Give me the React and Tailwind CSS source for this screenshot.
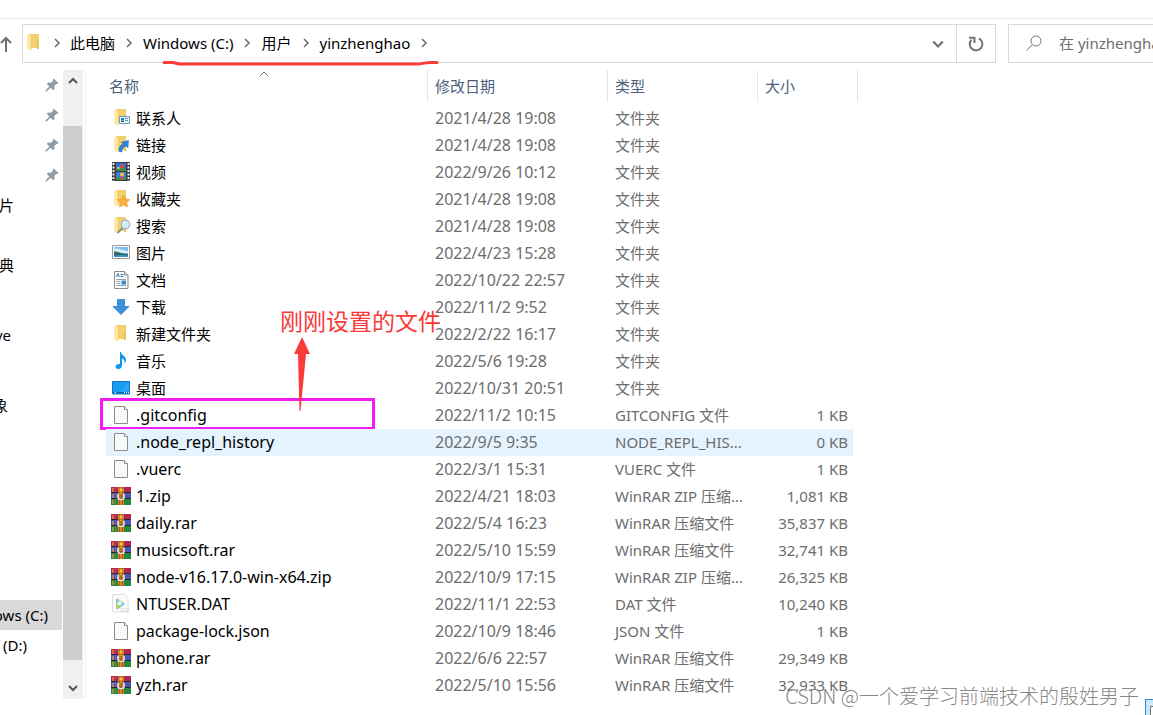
import { useState } from "react";

const crumbs = ["此电脑", "Windows (C:)", "用户", "yinzhenghao"];

const files = [
  { name: "联系人", date: "2021/4/28 19:08", type: "文件夹", size: "", icon: "contacts" },
  { name: "链接", date: "2021/4/28 19:08", type: "文件夹", size: "", icon: "links" },
  { name: "视频", date: "2022/9/26 10:12", type: "文件夹", size: "", icon: "video" },
  { name: "收藏夹", date: "2021/4/28 19:08", type: "文件夹", size: "", icon: "favorites" },
  { name: "搜索", date: "2021/4/28 19:08", type: "文件夹", size: "", icon: "search" },
  { name: "图片", date: "2022/4/23 15:28", type: "文件夹", size: "", icon: "pictures" },
  { name: "文档", date: "2022/10/22 22:57", type: "文件夹", size: "", icon: "documents" },
  { name: "下载", date: "2022/11/2 9:52", type: "文件夹", size: "", icon: "downloads" },
  { name: "新建文件夹", date: "2022/2/22 16:17", type: "文件夹", size: "", icon: "folder" },
  { name: "音乐", date: "2022/5/6 19:28", type: "文件夹", size: "", icon: "music" },
  { name: "桌面", date: "2022/10/31 20:51", type: "文件夹", size: "", icon: "desktop" },
  { name: ".gitconfig", date: "2022/11/2 10:15", type: "GITCONFIG 文件", size: "1 KB", icon: "file", marked: true },
  { name: ".node_repl_history", date: "2022/9/5 9:35", type: "NODE_REPL_HIS...", size: "0 KB", icon: "file" },
  { name: ".vuerc", date: "2022/3/1 15:31", type: "VUERC 文件", size: "1 KB", icon: "file" },
  { name: "1.zip", date: "2022/4/21 18:03", type: "WinRAR ZIP 压缩...", size: "1,081 KB", icon: "rar" },
  { name: "daily.rar", date: "2022/5/4 16:23", type: "WinRAR 压缩文件", size: "35,837 KB", icon: "rar" },
  { name: "musicsoft.rar", date: "2022/5/10 15:59", type: "WinRAR 压缩文件", size: "32,741 KB", icon: "rar" },
  { name: "node-v16.17.0-win-x64.zip", date: "2022/10/9 17:15", type: "WinRAR ZIP 压缩...", size: "26,325 KB", icon: "rar" },
  { name: "NTUSER.DAT", date: "2022/11/1 22:53", type: "DAT 文件", size: "10,240 KB", icon: "dat" },
  { name: "package-lock.json", date: "2022/10/9 18:46", type: "JSON 文件", size: "1 KB", icon: "file" },
  { name: "phone.rar", date: "2022/6/6 22:57", type: "WinRAR 压缩文件", size: "29,349 KB", icon: "rar" },
  { name: "yzh.rar", date: "2022/5/10 15:56", type: "WinRAR 压缩文件", size: "32,933 KB", icon: "rar" },
];

function FolderShape() {
  return (
    <>
      <path d="M5 1h10v14H5z" fill="#f3cf6e" />
      <path d="M13 7h2v9h-2z" fill="#e9c25b" />
      <path d="M3 1.5L7 3v14.5L3 16z" fill="#ffe9a6" />
      <path d="M7 3v14.5" stroke="#eecb6c" strokeWidth="0.6" />
    </>
  );
}

const iconShapes = {
  folder: <FolderShape />,
  contacts: (
    <>
      <FolderShape />
      <path d="M8.5 8.5h10v7h-10z" fill="#eaf6fd" stroke="#6f9fc0" />
      <path d="M10 10h3v2h-3z" fill="#2a83b8" />
      <path d="M10 12.5h3V14h-3z" fill="#33576d" />
      <path d="M14 10.5h3M14 12.5h3" stroke="#4a9ac6" />
    </>
  ),
  links: (
    <>
      <FolderShape />
      <path d="M8 16.5c-.5-4 1-6.500 4-7.500L10.500 7l7-1.500L17 13l-2-2c-3 1-4 3-4 6z" fill="#2f83d6" stroke="#2470bd" strokeWidth="0.5" />
    </>
  ),
  video: (
    <>
      <path d="M1 0h18v19H1z" fill="#3a3a3c" />
      <path d="M5 1h10v8H5z" fill="#2f6fd8" />
      <path d="M5 10h10v8H5z" fill="#3b7ce0" />
      <path d="M5 7l4-1 6 1v2H5zM5 16l5-1 5 1v2H5z" fill="#3f8f45" />
      <circle cx="11" cy="4" r="2" fill="#e04a33" />
      <circle cx="7.5" cy="6" r="1.2" fill="#f4c531" />
      <circle cx="11" cy="12.5" r="2" fill="#f4c531" />
      <path d="M9 15h4v2H9z" fill="#d84b2d" />
      <path d="M2.5 1v18M17.5 1v18" stroke="#f0f0f0" strokeWidth="2" strokeDasharray="2 1.5" />
    </>
  ),
  favorites: (
    <>
      <FolderShape />
      <path d="M12.5 6l2 4 4.5.6-3.300 3 .8 4.400-4-2.100-4 2.100.8-4.400-3.300-3 4.500-.6z" fill="#fbb040" stroke="#ee9420" strokeWidth="0.6" />
    </>
  ),
  search: (
    <>
      <FolderShape />
      <path d="M11 12.5l-4 4" stroke="#8a8f94" strokeWidth="2" strokeLinecap="round" />
      <circle cx="14.5" cy="8.5" r="4.3" fill="#cdeafa" stroke="#9fb4c2" strokeWidth="1.2" />
      <path d="M12 8.5A2.5 2.5 0 0 1 14.5 6" stroke="#fff" />
    </>
  ),
  pictures: (
    <>
      <path d="M1.5 2.5h17v13h-17z" fill="#fff" stroke="#9a9a9a" />
      <path d="M3 4h14v10H3z" fill="#7fbdf0" />
      <path d="M3 6c4-1.500 6 1 14 2v2H3z" fill="#d7ecfa" />
      <path d="M3 8.500c4 0 7 2 14 2.500v3H3z" fill="#2f6a69" />
      <path d="M3 12.5c5-1 9-.5 14 0V14H3z" fill="#3c8fce" />
    </>
  ),
  documents: (
    <>
      <path d="M3.5 1.5h10L17 5v13.500H3.500z" fill="#fbfbfb" stroke="#8b8b8b" />
      <path d="M13.5 1.5V5H17" fill="#e6e6e6" stroke="#8b8b8b" />
      <path d="M5.500 7L7 3.500 8.500 7" stroke="#2676bd" />
      <path d="M9.5 4.500h3M9.500 6.500h3" stroke="#2676bd" />
      <path d="M5.500 9.500H15M5.500 11.500h4M5.500 13.500h4M5.500 15.500H15" stroke="#8da3b5" />
      <path d="M10.5 10.500H15v4h-4.500z" fill="#3e8ccc" />
    </>
  ),
  downloads: (
    <path d="M6.5 2.500h7v7H18l-8 8-8-8h4.500z" fill="#3b93e0" stroke="#2c7cc7" strokeWidth="0.8" />
  ),
  music: (
    <path d="M10 1c.5 3.500 5 4 5 8 0 2-1 3-1.500 3.500.5-3-1-4.500-2.500-5V14c0 3-2 4-3.700 4-1.800 0-2.800-1-2.800-2.200 0-2 2.200-3.300 4.500-2.800V1z" fill="#0f97ec" />
  ),
  desktop: (
    <>
      <path d="M1.5 3.500h17V16h-17z" fill="#1a9cf4" stroke="#1174be" />
      <path d="M2 14.500h16" stroke="#0b5fa5" />
      <path d="M3.500 14.500H5M13 14.500h1M15 14.500h1M17 14.500h1" stroke="#d9f0ff" />
      <path d="M18 4v9l-9 1z" fill="#44b1f7" opacity="0.5" />
    </>
  ),
  file: (
    <>
      <path d="M3.5 1.500h10l3 3v14h-13z" fill="#f8f9f9" stroke="#8c8c8c" />
      <path d="M13.5 1.500v3h3" fill="#fff" stroke="#8c8c8c" />
    </>
  ),
  rar: (
    <>
      <path d="M0 1h20v5H0z" fill="#b3244f" />
      <path d="M0 7h20v5H0z" fill="#4a55b5" />
      <path d="M0 13h20v6H0z" fill="#22893c" />
      <path d="M0 6.500h20M0 12.500h20" stroke="#2c2433" />
      <path d="M2 2v4M2 8v4M2 14v4" stroke="#e2a83c" strokeWidth="1.2" />
      <path d="M4.500 1v5M4.500 7v5M4.500 13v5" stroke="#cc5c80" strokeWidth="0.5" />
      <path d="M7 1h6v18H7z" fill="#d9822b" />
      <path d="M8.500 1v18M11.500 1v18" stroke="#8d4c17" strokeWidth="0.7" />
      <circle cx="10" cy="4" r="2.2" fill="#f5c445" stroke="#8d4c17" strokeWidth="0.6" />
      <path d="M7 8v3.500c0 1.500 1.500 2 3 2s3-.5 3-2V8" stroke="#e8e8e2" strokeWidth="1.6" />
      <path d="M8.500 7h3v4h-3z" fill="#e0a33a" />
      <path d="M9.500 8h1v5h-1z" fill="#694522" />
    </>
  ),
  dat: (
    <>
      <path d="M1.5.5h12L17 4v14H1.500z" fill="#fcfcfc" stroke="#dedede" />
      <path d="M5 5.500V14c0 1 1 1.500 2 1l6-4c1-.7 1-1.500 0-2L7 4.700c-1-.4-2-.2-2 .8z" fill="#7cc9f2" />
      <path d="M5 9v5c0 1 1 1.500 2 1l3.500-2.500z" fill="#a9d873" />
      <path d="M6 4.500L12.500 8l-3 1z" fill="#f9dc88" />
      <circle cx="8.500" cy="9.500" r="1.800" fill="#fff" />
      <text x="9" y="18" fontSize="5" fill="#cfcfcf">VCD</text>
    </>
  ),
};

function FileIcon({ kind }) {
  return (
    <svg viewBox="0 0 20 20" className="h-5 w-5 shrink-0" fill="none" aria-hidden="true">
      {iconShapes[kind]}
    </svg>
  );
}

function Chevron({ className, d, size = 10 }) {
  return (
    <svg width={size} height={size} viewBox="0 0 10 10" fill="none" stroke="currentColor" className={className} aria-hidden="true">
      <path d={d} />
    </svg>
  );
}

function PinIcon() {
  return (
    <svg width="14" height="14" viewBox="0 0 14 14" className="text-[#8f9ba5]" aria-hidden="true">
      <path d="M8.5.5l5 4.500-1 1-1-.2-2.200 2.200.2 3-1.300 1.300-2.700-2.600-4 3.800h-1v-1l3.800-4L1.800 5.800 3 4.500l3 .2 2.200-2.200-.4-1z" fill="currentColor" />
    </svg>
  );
}

function AddressBar() {
  const [query, setQuery] = useState("");

  return (
    <div className="flex pt-[5px] pb-[7px]">
      <button type="button" aria-label="上移" className="w-[22px] shrink-0 flex items-center text-[#707070]">
        <svg width="13" height="16" viewBox="0 0 13 16" fill="none" stroke="currentColor" strokeWidth="2" aria-hidden="true">
          <path d="M6 16V2M1 7l5-5 5 5" />
        </svg>
      </button>

      <div className="relative flex-1 min-w-0 h-[39px] border border-[#d9d9d9] flex">
        <nav className="flex-1 flex items-center pl-px pb-0.5">
          <FileIcon kind="folder" />
          <Chevron className="w-[26px] text-[#6b6b6b] [stroke-width:1.5]" d="M3 1l4 4-4 4" />
          {crumbs.map((crumb) => (
            <div key={crumb} className="flex items-center">
              <a href="#" className="text-black whitespace-nowrap">{crumb}</a>
              <Chevron className="w-7 text-[#6b6b6b] [stroke-width:1.5]" d="M3 1l4 4-4 4" />
            </div>
          ))}
        </nav>
        <button type="button" aria-label="以前的位置" className="w-9 flex items-center justify-center text-[#707070]">
          <Chevron size={12} className="[stroke-width:1.8]" d="M1 3l4 4 4-4" />
        </button>
        <button type="button" aria-label="刷新" className="w-[39px] border-l border-[#d9d9d9] flex items-center justify-center text-[#737373]">
          <svg width="16" height="16" viewBox="0 0 16 16" fill="none" stroke="currentColor" strokeWidth="2" aria-hidden="true">
            <path d="M11 2.500A6.300 6.300 0 1 1 3.500 3.800" />
            <path d="M1 1.800h5.500V7" />
          </svg>
        </button>
        <svg width="280" height="6" viewBox="0 0 280 6" fill="none" className="absolute left-[138px] -bottom-1" aria-hidden="true">
          <path d="M3 2.500h9c3 .5 4 1.500 7 1.500h236c6 0 10-1.500 14-1.500h7" stroke="#fb3a3a" strokeWidth="3" strokeLinecap="round" />
        </svg>
      </div>

      <label className="ml-3 w-[145px] shrink-0 border border-r-0 border-[#d9d9d9] flex items-center pl-[17px] pb-0.5 gap-[17px]">
        <svg width="16" height="16" viewBox="0 0 16 16" fill="none" stroke="#777" className="shrink-0" aria-hidden="true">
          <circle cx="10" cy="6" r="5" />
          <path d="M6.500 9.500l-6 6" />
        </svg>
        <input
          type="text"
          value={query}
          onChange={(e) => setQuery(e.target.value)}
          placeholder="在 yinzhenghao 中搜索"
          className="min-w-0 flex-1 bg-transparent outline-none placeholder-[#6d6d6d]"
        />
      </label>
    </div>
  );
}

function Sidebar() {
  const row = "h-[30px] flex items-center justify-end overflow-hidden whitespace-nowrap";

  return (
    <aside className="w-[62px] shrink-0">
      {[0, 1, 2, 3].map((pin) => (
        <div key={pin} className={`${row} pr-[3px]`}>
          <PinIcon />
        </div>
      ))}
      <div className={`${row} pr-12`}>
        <span className="shrink-0">片</span>
      </div>
      <div className={row} />
      <div className={`${row} pr-12`}>
        <span className="shrink-0">典</span>
      </div>
      <div className={row} />
      <div className={`${row} mt-[10px] pr-[51px]`}>
        <span className="shrink-0">ve</span>
      </div>
      <div className={row} />
      <div className={`${row} mt-[10px] pr-[54px]`}>
        <span className="shrink-0">象</span>
      </div>
      <div className="h-[180px]" />
      <div className={`${row} pr-[14px] bg-[#d9d9d9]`}>
        <span className="shrink-0">ows (C:)</span>
      </div>
      <div className={`${row} pr-[35px]`}>
        <span className="shrink-0">(D:)</span>
      </div>
    </aside>
  );
}

function ScrollBar() {
  return (
    <div className="ml-px w-5 shrink-0 bg-[#f0f0f0] flex flex-col">
      <button type="button" aria-label="向上滚动" className="h-14 pt-1.5 pr-px flex items-start justify-center text-[#555]">
        <Chevron className="[stroke-width:2]" d="M1 7l4-4 4 4" />
      </button>
      <div className="flex-1 mr-px bg-[#cdcdcd]" />
      <button type="button" aria-label="向下滚动" className="h-[39px] pb-1.5 pr-px flex items-end justify-center text-[#555]">
        <Chevron className="[stroke-width:2]" d="M1 3l4 4 4-4" />
      </button>
    </div>
  );
}

function MarkedNote() {
  return (
    <div className="absolute -left-1.5 -top-1 w-[275px] h-8 border-3 border-[#f21df2] pointer-events-none">
      <p className="absolute left-[177px] -top-24 text-[23px] leading-8 text-[#fb3a3a] whitespace-nowrap">刚刚设置的文件</p>
      <svg width="16" height="74" viewBox="0 0 16 74" className="absolute left-[191px] -top-16" aria-hidden="true">
        <path d="M8 0l8 17h-4L6.500 74h-1L4 17H0z" fill="#fb3a3a" />
      </svg>
    </div>
  );
}

function FileTable() {
  const [hovered, setHovered] = useState(".node_repl_history");
  const head = "h-8 flex items-center border-r border-[#e5e5e5]";

  return (
    <table className="w-[752px] shrink-0 table-fixed text-left text-[#6d6d6d]">
      <colgroup>
        <col className="w-[322px]" />
        <col className="w-[180px]" />
        <col className="w-[150px]" />
        <col className="w-[95px]" />
        <col className="w-[5px]" />
      </colgroup>
      <thead className="text-[#4c607a]">
        <tr>
          <th className="p-0 pb-[3px] font-normal">
            <div className={`${head} relative pl-[3px]`}>
              名称
              <Chevron className="absolute left-[153px] -top-px text-[#777]" d="M1 7l4-4 4 4" />
            </div>
          </th>
          <th className="p-0 pb-[3px] font-normal">
            <div className={`${head} pl-[7px]`}>修改日期</div>
          </th>
          <th className="p-0 pb-[3px] font-normal">
            <div className={`${head} pl-[7px]`}>类型</div>
          </th>
          <th colSpan={2} className="p-0 pb-[3px] font-normal">
            <div className={`${head} pl-[7px]`}>大小</div>
          </th>
        </tr>
      </thead>
      <tbody>
        {files.map((file) => {
          const fill = hovered === file.name ? "bg-[#e5f3ff]" : "";
          const isFolder = file.type === "文件夹";
          return (
            <tr key={file.name} onMouseEnter={() => setHovered(file.name)}>
              <td className={`relative p-0 ${fill}`}>
                <div className={`h-[27px] pl-[5px] pb-0.5 flex items-center gap-[5px] text-black whitespace-nowrap ${isFolder ? "" : "text-base leading-6"}`}>
                  <FileIcon kind={file.icon} />
                  {file.name}
                </div>
                {file.marked && <MarkedNote />}
              </td>
              <td className={`p-0 pl-[7px] pb-0.5 text-base leading-6 ${fill}`}>{file.date}</td>
              <td className={`p-0 pl-[7px] pb-0.5 whitespace-nowrap ${fill}`}>{file.type}</td>
              <td className={`p-0 pr-[5px] pb-0.5 text-right whitespace-nowrap ${fill}`}>{file.size}</td>
              <td className="p-0" />
            </tr>
          );
        })}
      </tbody>
    </table>
  );
}

export default function App() {
  return (
    <div className="relative overflow-hidden bg-white text-[15px] leading-6 text-black font-['Noto_Sans','Noto_Sans_CJK_SC',sans-serif]">
      <div className="h-[19px] border-b border-[#e8e8e8]" />
      <AddressBar />

      <main className="flex">
        <Sidebar />
        <ScrollBar />
        <div className="ml-0.5 pl-5 border-l border-[#f0f0f0] flex-1 min-w-0">
          <FileTable />
        </div>
      </main>

      {/* Status bar */}
      <footer className="h-4 flex justify-end">
        <button type="button" aria-label="详细信息" className="w-2 border-t border-l border-[#2a8dd4] bg-[#cbe8f8] overflow-hidden">
          <span className="mt-[6px] ml-1 block h-3 w-3 border border-[#777] bg-white" />
        </button>
      </footer>

      <p className="absolute right-[14px] bottom-[5px] text-xl leading-7 text-[#777]/90 [text-shadow:1px_1px_1px_#fff] whitespace-nowrap font-['Noto_Sans_CJK_SC',sans-serif] font-light">
        CSDN @一个爱学习前端技术的殷姓男子
      </p>
    </div>
  );
}
